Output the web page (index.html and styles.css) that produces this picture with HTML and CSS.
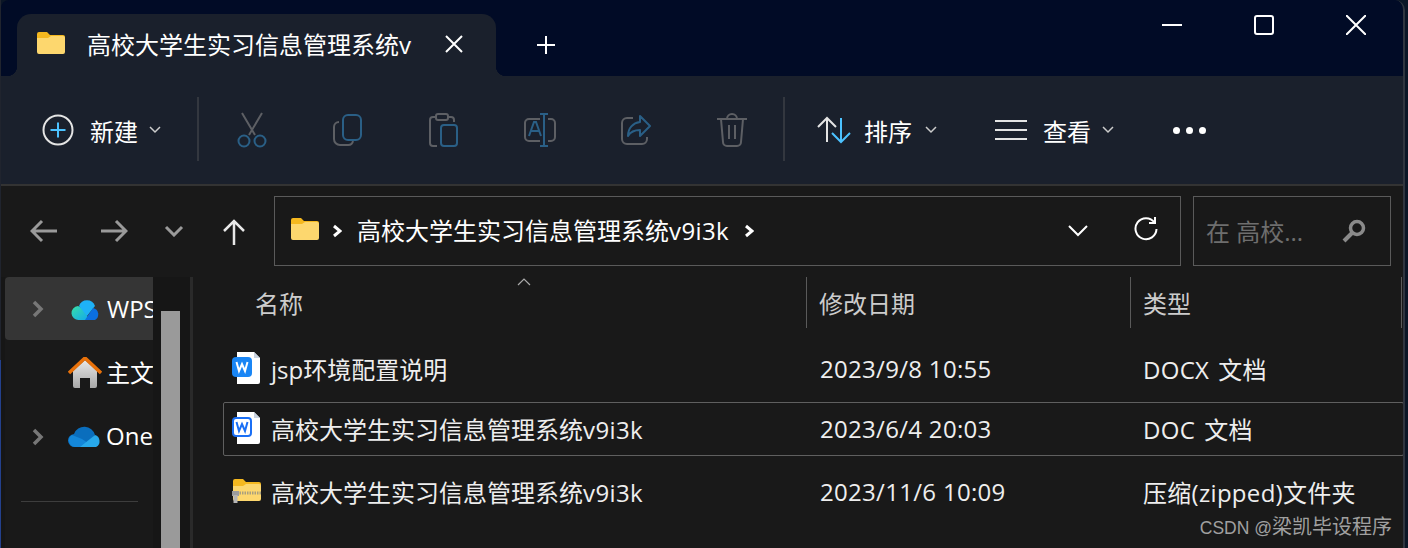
FILE: index.html
```html
<!DOCTYPE html>
<html lang="zh-CN">
<head>
    <meta charset="UTF-8">
    <title>高校大学生实习信息管理系统v9i3k</title>
    <link rel="stylesheet" href="styles.css">
</head>
<body>
<div id="win">
    <div id="titlebar">
        <div id="tab">
            <svg class="tabfolder" width="30" height="24" viewBox="0 0 30 24"><path d="M1 3a2 2 0 0 1 2-2h8l3 3h13a2 2 0 0 1 2 2v3H1z" fill="#f5b81f"/><path d="M1 7h11l3-2h12a2 2 0 0 1 2 2v14a2 2 0 0 1-2 2H3a2 2 0 0 1-2-2z" fill="#fdd76e"/></svg>
            <span id="tabtext">高校大学生实习信息管理系统v9i3k</span>
            <svg class="tabx" width="20" height="20" viewBox="0 0 20 20"><path d="M2 2l16 16M18 2L2 18" stroke="#fff" stroke-width="2" fill="none"/></svg>
        </div>
        <svg class="tabplus" width="20" height="20" viewBox="0 0 20 20"><path d="M10 1v18M1 10h18" stroke="#fff" stroke-width="2" fill="none"/></svg>
        <div id="winctrl">
            <svg width="20" height="20" viewBox="0 0 20 20"><path d="M0 10h20" stroke="#fff" stroke-width="2"/></svg>
            <svg width="20" height="20" viewBox="0 0 20 20"><rect x="1" y="1" width="18" height="18" rx="2" stroke="#fff" stroke-width="2" fill="none"/></svg>
            <svg width="20" height="20" viewBox="0 0 20 20"><path d="M0 0l20 20M20 0L0 20" stroke="#fff" stroke-width="2" fill="none"/></svg>
        </div>
    </div>

    <div id="toolbar">
        <div class="tool first">
            <svg width="32" height="32" viewBox="0 0 32 32"><circle cx="16" cy="16" r="14.500" stroke="#e4e4e4" stroke-width="2" fill="none"/><path d="M16 8.500v15M8.500 16h15" stroke="#4cc2ff" stroke-width="2" fill="none"/></svg>
            <span class="toolname">新建</span>
            <svg class="chev" width="12" height="8" viewBox="0 0 12 8"><path d="M1 1l5 5 5-5" stroke="#ccc" stroke-width="1.500" fill="none"/></svg>
        </div>
        <div class="sep"></div>
        <div class="icontool"><svg width="32" height="36" viewBox="0 0 32 36"><path d="M6 1l13 22M26 1L13 23" stroke="#5d5f64" stroke-width="2" fill="none"/><circle cx="8" cy="29" r="5.500" stroke="#2a5f86" stroke-width="2" fill="none"/><circle cx="24" cy="29" r="5.500" stroke="#2a5f86" stroke-width="2" fill="none"/></svg></div>
        <div class="icontool"><svg width="32" height="32" viewBox="0 0 32 32"><path d="M7 8a5 5 0 0 0-5 5v12a6 6 0 0 0 6 6h8a5 5 0 0 0 5-4" stroke="#5d5f64" stroke-width="2" fill="none"/><rect x="11" y="1" width="18" height="25" rx="5" stroke="#2a5f86" stroke-width="2" fill="none"/></svg></div>
        <div class="icontool"><svg width="32" height="36" viewBox="0 0 32 36"><path d="M8 5H5a3 3 0 0 0-3 3v23a3 3 0 0 0 3 3h4M20 5h3a3 3 0 0 1 3 3v2" stroke="#5d5f64" stroke-width="2" fill="none"/><rect x="8" y="2" width="12" height="6" rx="2" stroke="#5d5f64" stroke-width="2" fill="none"/><rect x="13" y="13" width="16" height="21" rx="3" stroke="#2a5f86" stroke-width="2" fill="none"/></svg></div>
        <div class="icontool"><svg width="34" height="36" viewBox="0 0 34 36"><path d="M17 7H6a4 4 0 0 0-4 4v14a4 4 0 0 0 4 4h11M25 7h3a4 4 0 0 1 4 4v14a4 4 0 0 1-4 4h-3" stroke="#5d5f64" stroke-width="2" fill="none"/><path d="M17 2h8M21 2v32M17 34h8M6 24l5-14h2l5 14M8 19h8" stroke="#2a5f86" stroke-width="2" fill="none"/></svg></div>
        <div class="icontool"><svg width="32" height="32" viewBox="0 0 32 32"><path d="M13 4H7a5 5 0 0 0-5 5v16a5 5 0 0 0 5 5h15a5 5 0 0 0 5-5v-2" stroke="#5d5f64" stroke-width="2" fill="none"/><path d="M20 2l10 10-10 10v-6c-5 0-9 1-12 6 0-8 5-13 12-14z" stroke="#2a5f86" stroke-width="2" fill="none" stroke-linejoin="round"/></svg></div>
        <div class="icontool"><svg width="30" height="34" viewBox="0 0 30 34"><path d="M0 6h30M10 6a5 5 0 0 1 10 0M4 6l2 23a4 4 0 0 0 4 4h10a4 4 0 0 0 4-4l2-23M12 12v14M18 12v14" stroke="#5d5f64" stroke-width="2" fill="none"/></svg></div>
        <div class="sep after"></div>
        <div class="tool sort">
            <svg width="34" height="28" viewBox="0 0 34 28"><path d="M10 26V2M1 11l9-9 9 9" stroke="#e4e4e4" stroke-width="2" fill="none"/><path d="M24 2v24M15 17l9 9 9-9" stroke="#4cc2ff" stroke-width="2" fill="none"/></svg>
            <span class="toolname">排序</span>
            <svg class="chev" width="12" height="8" viewBox="0 0 12 8"><path d="M1 1l5 5 5-5" stroke="#ccc" stroke-width="1.500" fill="none"/></svg>
        </div>
        <div class="tool view">
            <svg width="32" height="22" viewBox="0 0 32 22"><path d="M0 2h32M0 11h32M0 20h32" stroke="#e4e4e4" stroke-width="2"/></svg>
            <span class="toolname">查看</span>
            <svg class="chev" width="12" height="8" viewBox="0 0 12 8"><path d="M1 1l5 5 5-5" stroke="#ccc" stroke-width="1.500" fill="none"/></svg>
        </div>
        <div class="dots"><i></i><i></i><i></i></div>
    </div>

    <div id="navbar">
        <svg class="nav back" width="28" height="24" viewBox="0 0 28 24"><path d="M27 12H2M12 2L2 12l10 10" stroke="#9a9a9a" stroke-width="3" fill="none"/></svg>
        <svg class="nav fwd" width="28" height="24" viewBox="0 0 28 24"><path d="M1 12h25M16 2l10 10-10 10" stroke="#9a9a9a" stroke-width="3" fill="none"/></svg>
        <svg class="nav down" width="20" height="12" viewBox="0 0 20 12"><path d="M2 2l8 8 8-8" stroke="#9a9a9a" stroke-width="3" fill="none"/></svg>
        <svg class="nav up" width="24" height="26" viewBox="0 0 24 26"><path d="M12 26V2M2 12L12 2l10 10" stroke="#e8e8e8" stroke-width="2.500" fill="none"/></svg>
        <div id="addr">
            <svg width="30" height="24" viewBox="0 0 30 24"><path d="M1 3a2 2 0 0 1 2-2h8l3 3h13a2 2 0 0 1 2 2v3H1z" fill="#f5b81f"/><path d="M1 7h11l3-2h12a2 2 0 0 1 2 2v14a2 2 0 0 1-2 2H3a2 2 0 0 1-2-2z" fill="#fdd76e"/></svg>
            <svg class="crumb" width="10" height="14" viewBox="0 0 10 14"><path d="M2 2l6 5-6 5" stroke="#fff" stroke-width="3" fill="none"/></svg>
            <span class="addrtext">高校大学生实习信息管理系统<span class="lat">v9i3k</span></span>
            <svg class="crumb" width="10" height="14" viewBox="0 0 10 14"><path d="M2 2l6 5-6 5" stroke="#fff" stroke-width="3" fill="none"/></svg>
            <svg class="addrdown" width="20" height="12" viewBox="0 0 20 12"><path d="M1 1l9 9 9-9" stroke="#fff" stroke-width="2" fill="none"/></svg>
            <svg class="refresh" width="24" height="24" viewBox="0 0 24 24"><path d="M20.500 5.500A10.500 10.500 0 1 0 22.500 12M21 0v6h-6" stroke="#fff" stroke-width="2" fill="none"/></svg>
        </div>
        <div id="search">
            <span>在 高校...</span>
            <svg width="24" height="24" viewBox="0 0 24 24"><circle cx="15" cy="9" r="6.500" stroke="#8a8a8a" stroke-width="3.500" fill="none"/><path d="M10 14l-8 8" stroke="#8a8a8a" stroke-width="4" fill="none"/></svg>
        </div>
    </div>

    <div id="main">
        <div id="side">
            <div id="sidelist">
                <div class="siderow hot">
                    <svg class="sidechev" width="14" height="18" viewBox="0 0 14 18"><path d="M3 2l7 7-7 7" stroke="#777" stroke-width="3.500" fill="none"/></svg>
                    <svg class="sideicon" width="32" height="24" viewBox="0 0 32 24"><defs><linearGradient id="wpsa" x1="0" y1="0" x2="1" y2="1"><stop offset="0" stop-color="#38e0a6"/><stop offset="1" stop-color="#12a8ee"/></linearGradient></defs><path d="M9 23a7 7 0 0 1-1-14l6 3 5 11z" fill="url(#wpsa)"/><path d="M9 9a8.500 8.500 0 0 1 16 0l-8 10z" fill="#1eb2f7"/><path d="M15 23l8-12a6.500 6.500 0 0 1 2 12z" fill="#0b6fe0"/></svg>
                    <span>WPS云盘</span>
                </div>
                <div class="siderow">
                    <span class="sidechev"></span>
                    <svg class="sideicon" width="34" height="32" viewBox="0 0 34 32"><defs><linearGradient id="housea" x1="0" y1="0" x2="0" y2="1"><stop offset="0" stop-color="#e8e8e8"/><stop offset="1" stop-color="#a8a8a8"/></linearGradient></defs><path d="M5 14L17 3l12 11v15a2 2 0 0 1-2 2h-5V21h-10v10H7a2 2 0 0 1-2-2z" fill="url(#housea)"/><path d="M1 16L17 1l16 15" stroke="#e8710a" stroke-width="3.500" fill="none"/></svg>
                    <span>主文件夹</span>
                </div>
                <div class="siderow">
                    <svg class="sidechev" width="14" height="18" viewBox="0 0 14 18"><path d="M3 2l7 7-7 7" stroke="#777" stroke-width="3.500" fill="none"/></svg>
                    <svg class="sideicon" width="34" height="22" viewBox="0 0 34 22"><path d="M7 21a6.500 6.500 0 0 1-1-13 11 11 0 0 1 21 1l-10 12z" fill="#0a6ebd"/><path d="M7 21a6.500 6.500 0 0 1-3-12l10 4 12 8z" fill="#1487d9"/><path d="M12 21l15-12a6.500 6.500 0 0 1 1 12z" fill="#28a8ea"/></svg>
                    <span>OneDrive</span>
                </div>
                <div class="siderule"></div>
            </div>
            <div id="sidescroll"><div id="thumb"></div></div>
        </div>

        <div id="files">
            <div id="filehead">
                <svg class="sortmark" width="14" height="8" viewBox="0 0 14 8"><path d="M1 7l6-6 6 6" stroke="#aaa" stroke-width="1.200" fill="none"/></svg>
                <div class="hcell hname">名称</div>
                <div class="hcell hdate">修改日期</div>
                <div class="hcell htype">类型</div>
            </div>

            <div class="filerow">
                <div class="fname">
                    <svg class="ficon" width="30" height="34" viewBox="0 0 30 34"><path d="M6 1h17l6 6v24a2 2 0 0 1-2 2H6z" fill="#fff"/><path d="M23 1l6 6h-6z" fill="#c9d3e0"/><rect x="1" y="6" width="20" height="20" rx="4" fill="#1a86f5"/><path d="M5.500 11l2.500 9 3-7 3 7 2.500-9" stroke="#fff" stroke-width="2" fill="none"/></svg>
                    <span>jsp环境配置说明</span>
                </div>
                <div class="fdate">2023/9/8 10:55</div>
                <div class="ftype">DOCX 文档</div>
            </div>
            <div class="filerow sel">
                <div class="fname">
                    <svg class="ficon" width="30" height="34" viewBox="0 0 30 34"><path d="M6 1h17l6 6v24a2 2 0 0 1-2 2H6z" fill="#fff"/><path d="M23 1l6 6h-6z" fill="#c9d3e0"/><rect x="2" y="7" width="18" height="18" rx="3" fill="#fff" stroke="#1a6ff5" stroke-width="2"/><path d="M5.500 11l2.500 9 3-7 3 7 2.500-9" stroke="#1a6ff5" stroke-width="2" fill="none"/></svg>
                    <span>高校大学生实习信息管理系统<span class="lat">v9i3k</span></span>
                </div>
                <div class="fdate">2023/6/4 20:03</div>
                <div class="ftype">DOC 文档</div>
            </div>
            <div class="filerow">
                <div class="fname">
                    <svg class="ficon" width="30" height="26" viewBox="0 0 30 26"><path d="M2 3a2 2 0 0 1 2-2h8l3 3h13a2 2 0 0 1 2 2v4H2z" fill="#f5b81f"/><path d="M2 8h10l3-2h13a2 2 0 0 1 2 2v13a2 2 0 0 1-2 2H4a2 2 0 0 1-2-2z" fill="#fdd76e"/><path d="M6 15h24" stroke="#a89f80" stroke-width="3" stroke-dasharray="1.500 1"/><rect x="1" y="13" width="7" height="5" fill="#9c9c9c"/><rect x="2.500" y="17" width="4" height="8" fill="#b5b5b5"/></svg>
                    <span>高校大学生实习信息管理系统<span class="lat">v9i3k</span></span>
                </div>
                <div class="fdate">2023/11/6 10:09</div>
                <div class="ftype">压缩(zipped)文件夹</div>
            </div>
        </div>
    </div>
    <div id="mark"><span class="marklat">CSDN @</span>梁凯毕设程序</div>
</div>
</body>
</html>
```

FILE: styles.css
```css
html,body{
    margin: 0;
    height: 100%;
    overflow: hidden;
}
body{
    background: linear-gradient(#20242e 360px, #23408c 360px) 0 0 / 1px 100% no-repeat #0b1626;
}
#win{
    position: relative;
    width: 1404px;
    height: 548px;
    margin-left: 1px;
    box-sizing: border-box;
    border-right: 2px solid #30353f;
    border-radius: 8px 10px 0 0;
    overflow: hidden;
    display: flex;
    flex-direction: column;
    font-family: "Open Sans", "Noto Sans CJK SC", sans-serif;
    font-size: 24px;
    color: #eee;
}
svg{
    display: block;
    flex: none;
}
.lat{
    letter-spacing: 0.4px;
}

/* title bar */
#titlebar{
    height: 76px;
    flex: none;
    background: #010b26;
    display: flex;
    align-items: flex-start;
    padding-left: 16px;
    box-sizing: border-box;
}
#tab{
    position: relative;
    width: 479px;
    height: 62px;
    margin-top: 14px;
    background: #1a202c;
    border-radius: 14px 14px 0 0;
    display: flex;
    align-items: center;
    padding: 0 0 0 19px;
    box-sizing: border-box;
}
#tab::before,#tab::after{
    content: "";
    position: absolute;
    bottom: 0;
    width: 10px;
    height: 10px;
}
#tab::before{
    left: -10px;
    background: radial-gradient(circle at 0 0, transparent 10px, #1a202c 10.500px);
}
#tab::after{
    right: -10px;
    background: radial-gradient(circle at 100% 0, transparent 10px, #1a202c 10.500px);
}
.tabfolder{
    margin-top: -5px;
}
#tabtext{
    width: 325px;
    margin-left: 21px;
    overflow: hidden;
    white-space: nowrap;
    color: #fff;
    margin-top: -3px;
}
.tabx{
    margin-left: 32px;
    margin-top: -3px;
}
.tabplus{
    margin: 35px 0 0 40px;
}
#winctrl{
    margin-left: auto;
    display: flex;
    gap: 72px;
    padding: 15px 37px 0 0;
}

/* toolbar */
#toolbar{
    height: 110px;
    flex: none;
    background: #1a202c;
    border-bottom: 2px solid #333;
    box-sizing: border-box;
    display: flex;
    align-items: center;
    padding-left: 41px;
}
.tool{
    display: flex;
    align-items: center;
    color: #fff;
}
.first{
    width: 155px;
}
.toolname{
    margin-left: 16px;
    margin-top: 0;
}
.chev{
    margin-left: 11px;
}
.sep{
    width: 2px;
    height: 64px;
    background: #33373f;
    margin: -2px 5px 0 0;
}
.sep.after{
    margin-left: 3px;
    margin-right: 0;
}
.icontool{
    width: 96px;
    display: flex;
    justify-content: center;
}
.sort{
    margin-left: 32px;
}
.sort .toolname{
    margin-left: 13px;
}
.sort .chev{
    margin-left: 13px;
}
.view{
    margin-left: 58px;
}
.dots{
    display: flex;
    gap: 6px;
    margin-left: 59px;
}
.dots i{
    width: 7px;
    height: 7px;
    border-radius: 50%;
    background: #fff;
}

/* address row */
#navbar{
    height: 91px;
    flex: none;
    background: #191919;
    display: flex;
    align-items: center;
    padding: 0 0 2px 29px;
    box-sizing: border-box;
}
.fwd{
    margin-left: 42px;
}
.down{
    margin-left: 36px;
}
.up{
    margin-left: 38px;
    margin-top: 2px;
}
#addr{
    width: 907px;
    height: 70px;
    margin-left: 28px;
    box-sizing: border-box;
    border: 1px solid #5a5a5a;
    display: flex;
    align-items: center;
    padding-left: 15px;
    color: #fff;
}
#addr svg:first-child{
    margin-top: -3px;
}
.crumb{
    margin-left: 12px;
}
.addrtext{
    margin-left: 15px;
    margin-top: -2px;
}
.addrtext + .crumb{
    margin-left: 15px;
}
.addrdown{
    margin-left: auto;
}
.refresh{
    margin: -3px 22px 0 46px;
}
#search{
    width: 198px;
    height: 70px;
    margin-left: 12px;
    flex: none;
    box-sizing: border-box;
    border: 1px solid #5a5a5a;
    display: flex;
    align-items: center;
    justify-content: space-between;
    padding: 0 24px 0 12px;
    color: #6e6e6e;
}

/* sidebar + files */
#main{
    flex: 1;
    display: flex;
    min-height: 0;
    background: #191919;
}
#side{
    width: 189px;
    flex: none;
    display: flex;
    background: #161616;
    border-right: 3px solid #2a2a2a;
}
#sidelist{
    width: 148px;
    margin-left: 4px;
    flex: none;
    overflow: hidden;
    background: #191919;
}
.siderow{
    height: 63px;
    display: flex;
    align-items: center;
    white-space: nowrap;
    color: #fff;
    padding-left: 26px;
    margin-bottom: 1px;
    border-radius: 4px 0 0 4px;
}
.siderow.hot{
    background: #353535;
}
.sidechev{
    width: 14px;
    flex: none;
}
.sideicon{
    margin-left: 25px;
}
.siderow:nth-child(2) .sideicon,.siderow:nth-child(3) .sideicon{
    margin-left: 23px;
}
.siderow span:last-child{
    margin-left: 4px;
    margin-top: -2px;
}
.siderow.hot span:last-child{
    margin-left: 5px;
}
.siderule{
    height: 1px;
    background: #3d3d3d;
    margin: 33px 15px 0 16px;
}
#sidescroll{
    width: 19px;
    margin-left: 8px;
    padding-top: 34px;
    box-sizing: border-box;
}
#thumb{
    height: 100%;
    background: #9a9a9a;
}
#files{
    flex: 1;
    min-width: 0;
    overflow: hidden;
}
#filehead{
    position: relative;
    height: 51px;
    margin-bottom: 14px;
    display: grid;
    grid-template-columns: 614px 324px 271px;
    color: #ccc;
}
.sortmark{
    position: absolute;
    left: 324px;
    top: 1px;
}
.hcell{
    height: 51px;
    line-height: 53px;
    box-sizing: border-box;
    border-right: 1px solid #5a5a5a;
    white-space: nowrap;
}
.hname{
    padding-left: 62px;
}
.hdate,.htype{
    padding-left: 12px;
}
.filerow{
    width: 1181px;
    height: 54px;
    margin: 0 0 8px 30px;
    padding-bottom: 2px;
    box-sizing: border-box;
    border: 1px solid transparent;
    border-radius: 2px;
    display: grid;
    grid-template-columns: 596px 323px 1fr;
    align-items: center;
    white-space: nowrap;
    color: #eee;
}
.filerow.sel{
    border-color: #5f5f5f;
    margin-top: -2px;
    margin-bottom: 9px;
}
.fname{
    display: flex;
    align-items: center;
    padding-left: 7px;
}
.ficon{
    margin-top: 0;
}
.fname span{
    margin-left: 10px;
}
.fname span.lat{
    margin-left: 0;
}
.fdate{
    letter-spacing: 0.3px;
}
.ftype{
    letter-spacing: 0.3px;
    word-spacing: 2.500px;
}
#mark{
    position: absolute;
    right: 11px;
    bottom: 6px;
    font-family: "Liberation Sans", "Noto Sans CJK SC", sans-serif;
    font-size: 20px;
    line-height: 28px;
    color: #a0a0a0;
}
.marklat{
    font-size: 17.500px;
}
```
